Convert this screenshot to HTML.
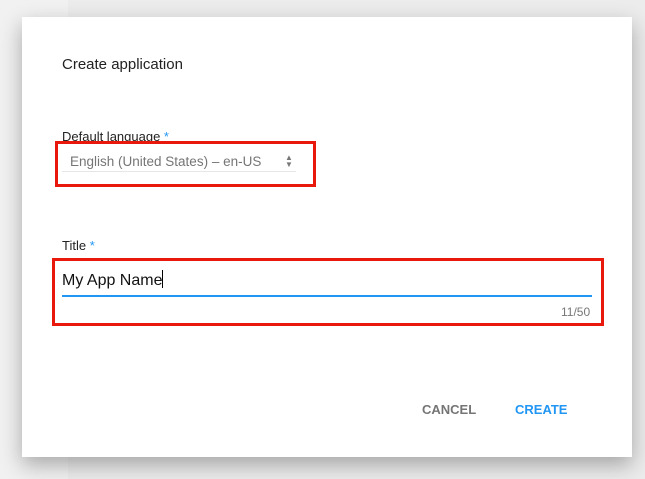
<!DOCTYPE html>
<html><head><style>
body{margin:0;width:645px;height:479px;background:#ececec;position:relative;overflow:hidden;font-family:"Liberation Sans",sans-serif;}
.strip{position:absolute;left:0;top:0;width:68px;height:479px;background:#f1f1f1;}
.dlg{position:absolute;left:22px;top:17px;width:610px;height:440px;background:#fff;box-shadow:0 8px 20px rgba(0,0,0,.3);}
.t{position:absolute;white-space:nowrap;}
.red{position:absolute;border:3px solid #e8180c;box-sizing:border-box;}
</style></head><body>
<div class="strip"></div>
<div class="dlg"></div>
<div class="t" style="left:62px;top:56px;font-size:15px;color:#222;">Create application</div>
<div class="t" style="left:62px;top:129px;font-size:13px;color:#222;">Default language <span style="color:#2196f3">*</span></div>
<div class="t" style="left:70px;top:154px;font-size:13.5px;color:#757575;">English (United States) – en-US</div>
<div style="position:absolute;left:62px;top:171px;width:234px;height:1px;background:#e6e6e6;"></div>
<div class="t" style="left:285px;top:154px;font-size:8px;color:#777;line-height:7px;">▲<br>▼</div>
<div class="red" style="left:55px;top:141px;width:261px;height:46px;"></div>
<div class="t" style="left:62px;top:238px;font-size:13px;color:#222;">Title <span style="color:#2196f3">*</span></div>
<div class="t" style="left:62px;top:270px;font-size:16px;color:#111;">My App Name<span style="display:inline-block;width:1px;height:18px;background:#000;vertical-align:-3px;"></span></div>
<div style="position:absolute;left:62px;top:295px;width:530px;height:2px;background:#2196f3;"></div>
<div class="t" style="left:561px;top:305px;font-size:12px;color:#777;">11/50</div>
<div class="red" style="left:52px;top:258px;width:552px;height:68px;"></div>
<div class="t" style="left:422px;top:402px;font-size:13px;font-weight:bold;color:#757575;">CANCEL</div>
<div class="t" style="left:515px;top:402px;font-size:13px;font-weight:bold;color:#2196f3;">CREATE</div>
</body></html>
